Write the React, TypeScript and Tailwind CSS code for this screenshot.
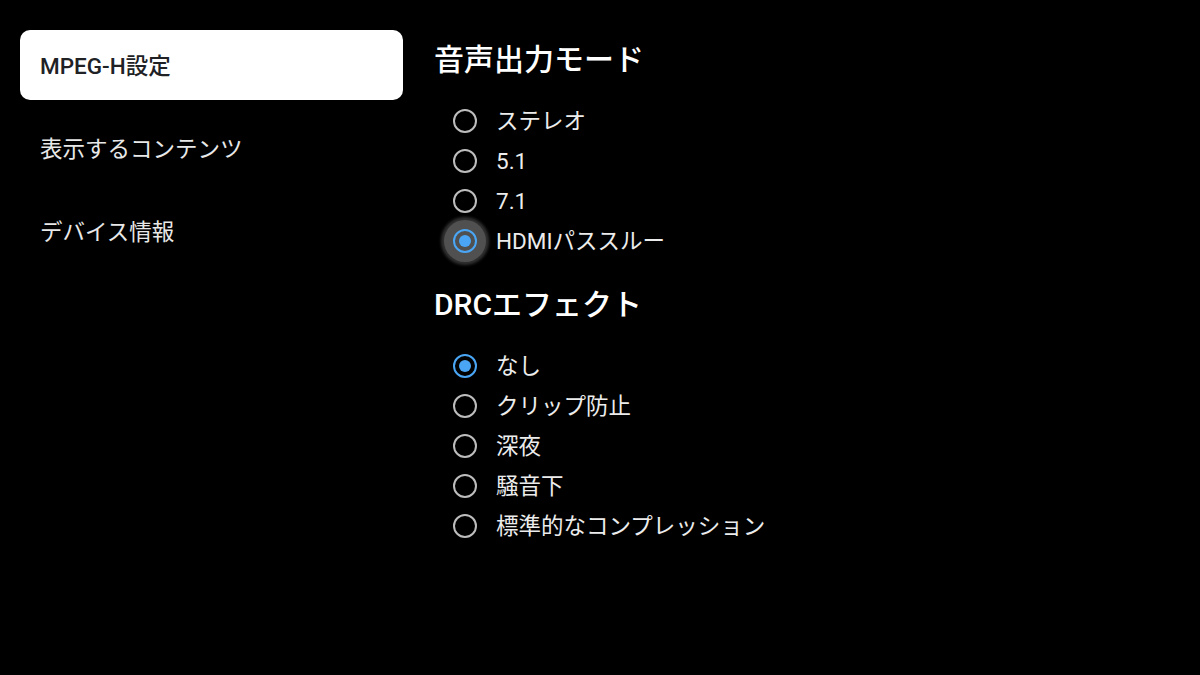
const FONT = "font-['Roboto','Noto_Sans_CJK_JP',sans-serif]";

const menu = ["MPEG-H設定", "表示するコンテンツ", "デバイス情報"];

const sections = [
  {
    title: "音声出力モード",
    options: ["ステレオ", "5.1", "7.1", "HDMIパススルー"],
    selected: 3,
    focused: 3,
  },
  {
    title: "DRCエフェクト",
    options: ["なし", "クリップ防止", "深夜", "騒音下", "標準的なコンプレッション"],
    selected: 0,
    focused: -1,
  },
];

function Radio({ checked, focused }: { checked: boolean; focused: boolean }) {
  return (
    <div className="relative flex h-10 w-10 items-center justify-center">
      {focused && (
        <div className="absolute -inset-[1px] rounded-full bg-[#505050] shadow-[0_0_3px_3px_rgba(70,70,70,0.7)]" />
      )}
      <div
        className={`relative flex h-[24px] w-[24px] items-center justify-center rounded-full border-[2.5px] ${
          checked ? "border-[#4aa6f5]" : "border-[#bdbdbd]"
        }`}
      >
        {checked && <div className="h-[12px] w-[12px] rounded-full bg-[#4aa6f5]" />}
      </div>
    </div>
  );
}

export default function App() {
  return (
    <div className={`flex h-[675px] w-[1200px] bg-black ${FONT}`}>
      <div className="flex w-[403px] flex-col gap-[13px] pl-[20px] pt-[30px]">
        {menu.map((item, i) => (
          <div
            key={item}
            className={`flex h-[70px] items-center rounded-[10px] px-[20px] pt-[4px] text-[22.5px] ${
              i === 0 ? "bg-white font-medium text-[#202124]" : "text-[#e8e8e8]"
            }`}
          >
            {item}
          </div>
        ))}
      </div>
      <div className="flex flex-col gap-[24px] pl-[31px] pt-[40px]">
        {sections.map((s) => (
          <div key={s.title} className="flex flex-col">
            <h2 className="mb-[21px] h-10 text-[30px] font-medium leading-10 text-white">{s.title}</h2>
            {s.options.map((o, i) => (
              <div key={o} className="flex h-10 items-center gap-[11px] pl-[11px]">
                <Radio checked={i === s.selected} focused={i === s.focused} />
                <span className="pt-[2px] text-[22.5px] text-[#ececec]">{o}</span>
              </div>
            ))}
          </div>
        ))}
      </div>
    </div>
  );
}
